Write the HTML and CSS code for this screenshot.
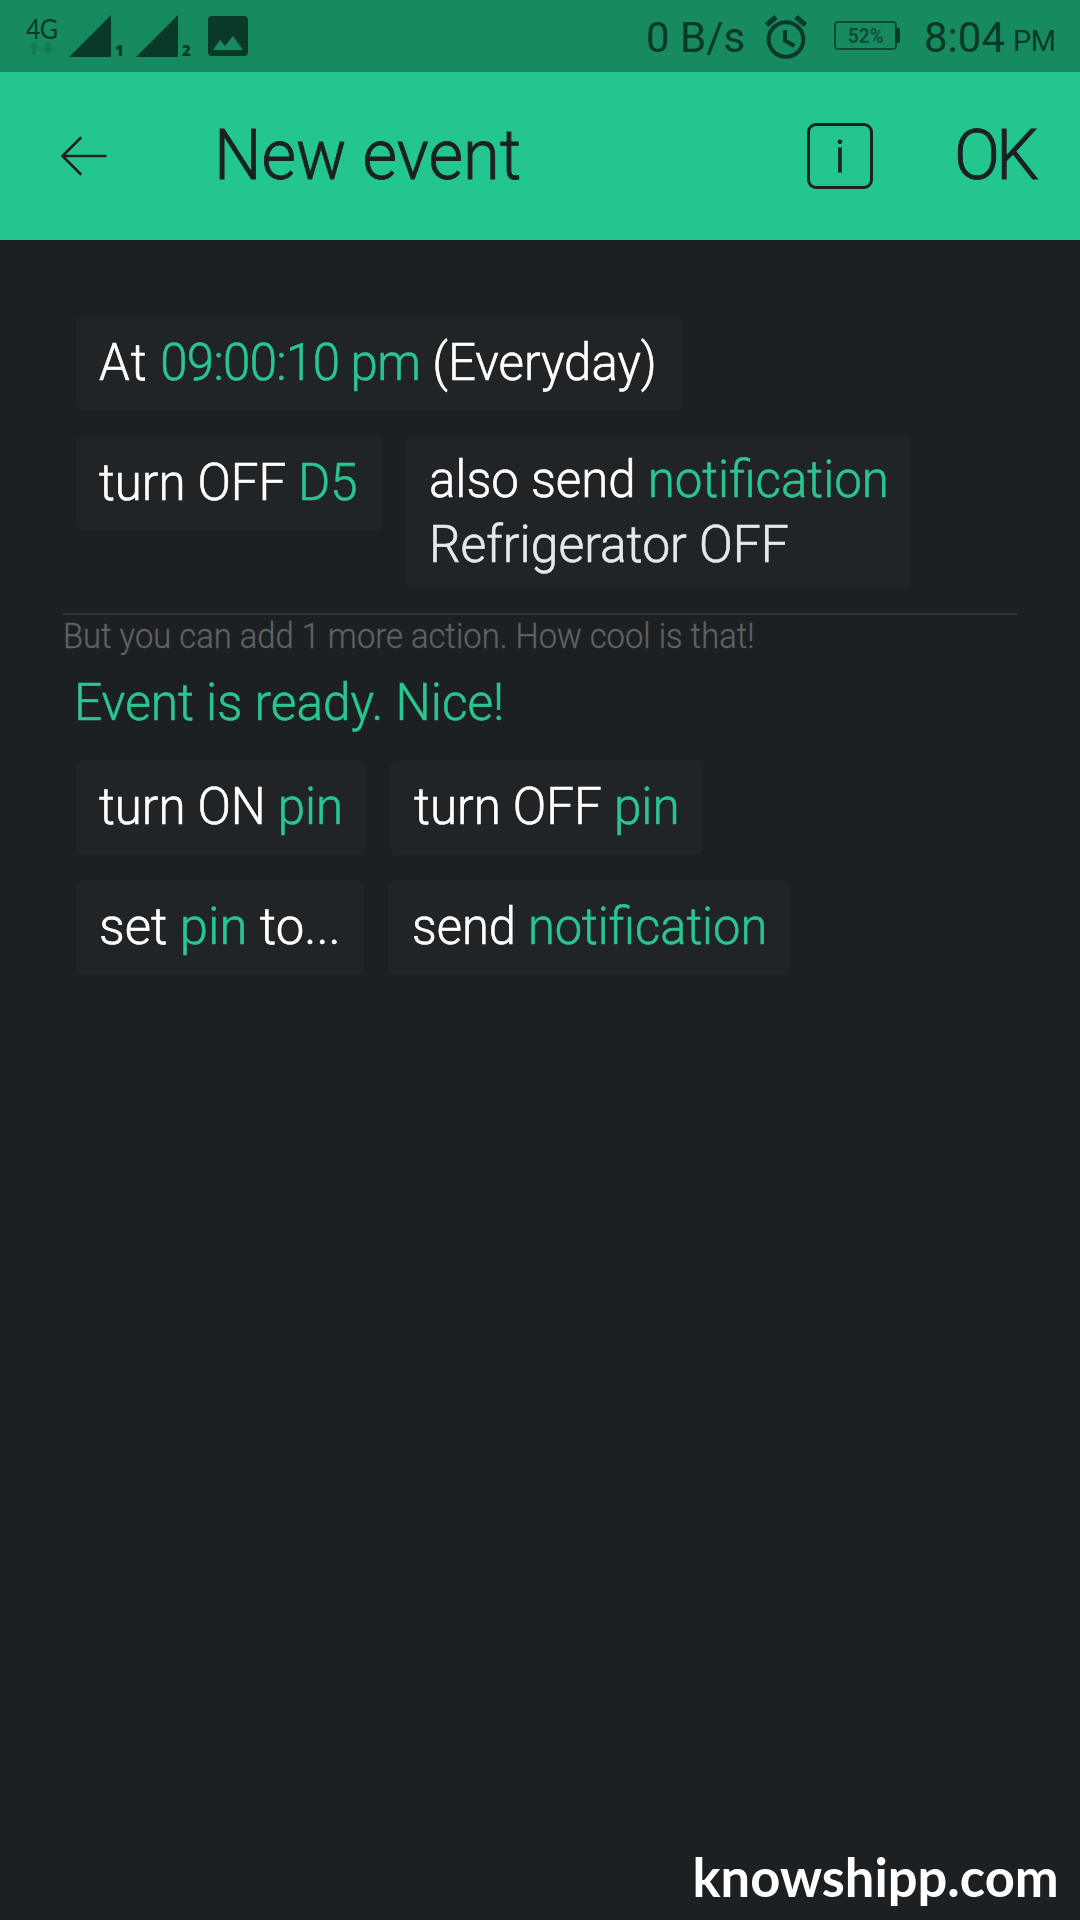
FILE: index.html
```html
<!DOCTYPE html>
<html lang="en">
<head>
  <meta charset="UTF-8">
  <meta name="viewport" content="width=device-width, initial-scale=1.0">
  <title>New event</title>
  <link rel="stylesheet" href="styles.css">
</head>
<body>
  <div class="status-bar">
    <div class="network">
      <span class="network-type">4G</span>
      <svg class="data-arrows" width="28" height="14" viewBox="0 0 28 14">
        <path d="M7 0l6 6H9v7H5V6H1zM21 13l-6-6h4V0h4v7h4z"/>
      </svg>
    </div>
    <svg class="signal" width="42" height="42" viewBox="0 0 42 42"><path d="M42 0v42H0z"/></svg>
    <span class="sim sim-one">1</span>
    <svg class="signal" width="42" height="42" viewBox="0 0 42 42"><path d="M42 0v42H0z"/></svg>
    <span class="sim sim-two">2</span>
    <svg class="picture" width="40" height="40" viewBox="0 0 40 40">
      <path fill-rule="evenodd" d="M4 0h32a4 4 0 0 1 4 4v32a4 4 0 0 1-4 4H4a4 4 0 0 1-4-4V4a4 4 0 0 1 4-4zM5 34h30L25 20l-8 10-5-6z"/>
    </svg>
    <div class="status-right">
      <span class="speed">0 B/s</span>
      <svg class="alarm" width="42" height="44" viewBox="0 0 42 44">
        <circle cx="21" cy="24.500" r="17.300"/>
        <path d="M20 15v10.500l9.500 5.500"/>
        <path class="bell" d="M1.500 10L11 2M31 2l9.500 8"/>
      </svg>
      <div class="battery"><span>52%</span></div>
      <span class="clock">8:04</span>
      <span class="meridiem">PM</span>
    </div>
  </div>

  <header class="header">
    <svg class="back" width="48" height="42" viewBox="0 0 48 42">
      <path d="M20.500 3L2.500 21l18 18M2.500 21H45.500"/>
    </svg>
    <h1><span>New event</span></h1>
    <div class="info">i</div>
    <div class="ok">OK</div>
  </header>

  <main class="content">
    <div class="row">
      <div class="card card-time"><span><i>At</i> <b>09:00:10 pm</b> (Everyday)</span></div>
    </div>
    <div class="row">
      <div class="card card-d5"><span>turn OFF <b>D5</b></span></div>
      <div class="card card-also">
        <span>also send <b>notification</b></span>
        <span class="message">Refrigerator OFF</span>
      </div>
    </div>

    <p class="hint"><span>But you can add 1 more action. How cool is that!</span></p>
    <p class="ready"><span>Event is ready. Nice!</span></p>

    <div class="row">
      <div class="card card-on"><span>turn ON <b>pin</b></span></div>
      <div class="card card-off"><span>turn OFF <b>pin</b></span></div>
    </div>
    <div class="row">
      <div class="card card-set"><span>set <b>pin</b> to...</span></div>
      <div class="card card-send"><span>send <b>notification</b></span></div>
    </div>
  </main>

  <footer class="watermark"><span>knowshipp.com</span></footer>
</body>
</html>
```
FILE: styles.css
```css
* {
  box-sizing: border-box;
}
body {
  margin: 0;
  height: 1920px;
  display: flex;
  flex-direction: column;
  background-color: #1d2023;
  color: #fff;
  font-family: Roboto, "Liberation Sans", sans-serif;
  font-weight: 300;
  overflow: hidden;
  white-space: nowrap;
}
svg {
  display: block;
  flex: none;
}

/* status bar */
.status-bar {
  height: 72px;
  flex: none;
  display: flex;
  align-items: flex-start;
  padding: 15px 24px 0 26px;
  background-color: #188a5f;
  color: #093a29;
  fill: #093a29;
  font-weight: 400;
}
.network {
  width: 43px;
}
.network-type {
  display: block;
  font-family: Lato, sans-serif;
  font-size: 27px;
  line-height: 27px;
  letter-spacing: -1px;
  transform: scaleX(0.930);
  transform-origin: left;
}
.data-arrows {
  margin-left: 1px;
  fill: #167a55;
}
.sim {
  font-family: "Open Sans", sans-serif;
  font-weight: 800;
  font-size: 15px;
  line-height: 15px;
  padding: 28px 0 0 4px;
}
.sim-one {
  width: 25px;
}
.sim-two {
  width: 30px;
}
.picture {
  margin-top: 1px;
}
.status-right {
  margin-left: auto;
  display: flex;
  align-items: flex-start;
}
.speed, .clock {
  font-size: 42px;
  line-height: 45px;
}
.speed {
  width: 119px;
}
.alarm {
  fill: none;
  stroke: #093a29;
  stroke-width: 4;
}
.alarm .bell {
  stroke-width: 5;
}
.battery {
  width: 63px;
  height: 29px;
  margin: 6px 27px 0 27px;
  border: 2px solid #0b4d35;
  border-radius: 4px;
  position: relative;
  font-family: Roboto, sans-serif;
  font-weight: 700;
  font-size: 21px;
  line-height: 27px;
  text-align: center;
  color: #0b4d35;
}
.battery span {
  display: inline-block;
  transform: scaleX(0.900);
}
.battery::after {
  content: "";
  position: absolute;
  right: -5px;
  top: 5px;
  width: 5px;
  height: 15px;
  background-color: #093a29;
  border-radius: 0 2px 2px 0;
}
.clock {
  width: 89px;
}
.meridiem {
  font-size: 29px;
  line-height: 33px;
  padding-top: 10px;
  width: 43px;
  letter-spacing: -0.500px;
}

/* title bar */
.header {
  height: 168px;
  flex: none;
  display: flex;
  align-items: center;
  padding: 0 40px 0 60px;
  background-color: #24c690;
  color: #1d2023;
}
.back {
  fill: none;
  stroke: #1d2023;
  stroke-width: 2.600;
  stroke-linecap: round;
}
h1, .ok {
  margin: 0;
  padding-bottom: 2px;
  font-size: 70px;
  line-height: 84px;
  font-weight: 300;
  -webkit-text-stroke: 0.900px;
}
h1 {
  margin-left: 106px;
  width: 593px;
}
.info {
  width: 66px;
  height: 66px;
  flex: none;
  border: 3px solid #1d2023;
  border-radius: 9px;
  font-size: 44px;
  line-height: 62px;
  text-align: center;
  -webkit-text-stroke: 0.900px;
}
.ok {
  margin-left: 81px;
  letter-spacing: -4px;
  transform: scaleX(0.970);
  transform-origin: left;
}

/* narrow lettering */
h1 span, .card span, .hint span, .ready span, .watermark span {
  display: block;
  width: max-content;
  transform: scaleX(0.946);
  transform-origin: left;
}
h1 span {
  transform: scaleX(0.954);
}

/* event builder */
.content {
  flex: 1;
  padding: 76px 63px 0;
  font-size: 52px;
  -webkit-text-stroke: 0.600px;
}
.row {
  display: flex;
  align-items: flex-start;
  gap: 24px;
  padding-left: 13px;
  margin-bottom: 25px;
}
.card {
  height: 95px;
  padding: 14px 0 0 23px;
  background-color: #212427;
  border-radius: 8px;
  line-height: 65px;
}
b {
  font-weight: 300;
  color: #2ac593;
}
.card-time {
  width: 607px;
}
.card-time i {
  font-style: normal;
  letter-spacing: 1.600px;
}
.card-time b {
  letter-spacing: -0.700px;
}
.card-d5 {
  width: 306px;
}
.card-also {
  width: 504px;
  height: 152px;
  padding-top: 11px;
}
.card .message {
  color: #e6e9ec;
  transform: scaleX(0.957);
}
.card-on {
  width: 290px;
}
.card-off {
  width: 313px;
  padding-left: 24px;
}
.card-off span {
  transform: scaleX(0.950);
}
.card-set {
  width: 288px;
}
.card-set span {
  transform: scaleX(0.978);
}
.card-send {
  width: 402px;
  padding-left: 24px;
}
.card-send span {
  transform: scaleX(0.939);
}
.hint {
  margin: 0;
  border-top: 2px solid #323538;
  color: #5f6264;
  font-size: 35px;
  line-height: 44px;
  -webkit-text-stroke: 0.300px;
}
.hint span {
  transform: scaleX(0.936);
}
.ready {
  margin: 0 0 25px;
  padding: 11px 0 0 11px;
  line-height: 65px;
  color: #2ac593;
}
.ready span {
  transform: scaleX(0.954);
}

.watermark {
  flex: none;
  display: flex;
  justify-content: flex-end;
  padding: 0 21px 13px 0;
  font-family: Lato, sans-serif;
  font-weight: 700;
  font-size: 54px;
  line-height: 60px;
}
.watermark span {
  transform: scaleX(0.972);
  transform-origin: right;
}
```
